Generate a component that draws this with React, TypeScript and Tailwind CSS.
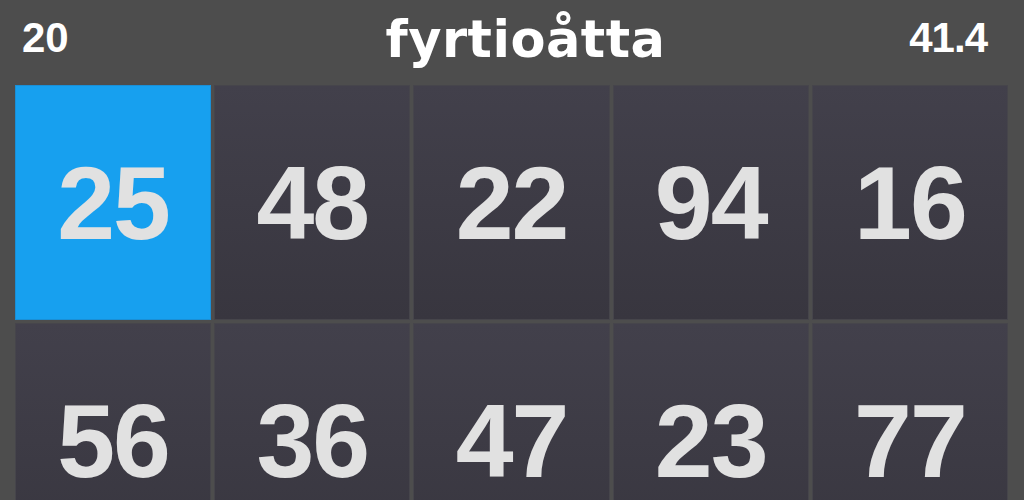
import React from 'react';

const rows: number[][] = [
  [25, 48, 22, 94, 16],
  [56, 36, 47, 23, 77],
];

const font = { fontFamily: '"Liberation Sans", Arial, sans-serif' };
const titleFont = { fontFamily: '"DejaVu Sans", "Liberation Sans", sans-serif' };

const Cell: React.FC<{ value: number; active?: boolean }> = ({ value, active }) => (
  <div
    className={
      active
        ? 'h-[235px] flex items-center justify-center bg-[#17a0ef] border border-[#1a8fd6]'
        : 'h-[235px] flex items-center justify-center bg-gradient-to-b from-[#42404b] to-[#38363f] border border-[#46454b]'
    }
  >
    <span className="text-[104px] font-bold leading-none text-[#e1e1e1] tracking-[-2px]">{value}</span>
  </div>
);

export default function App() {
  return (
    <div className="w-[1024px] h-[500px] overflow-hidden bg-[#4d4d4d]" style={font}>
      <div className="h-[85px] flex items-start pt-[14px] pl-[22px] pr-[37px] text-white font-bold">
        <div className="w-[321px] text-[42px] leading-none pt-[3px]">20</div>
        <div className="flex-1 text-center text-[51px] leading-none tracking-[0.5px]" style={titleFont}>
          fyrtioåtta
        </div>
        <div className="w-[279px] text-right text-[42px] leading-none pt-[3px] tracking-[-1px]">41.4</div>
      </div>
      <div className="grid grid-cols-5 gap-[3px] pl-[15px] pr-[16px]">
        {rows.flat().map((v, i) => (
          <Cell key={i} value={v} active={i === 0} />
        ))}
      </div>
    </div>
  );
}
